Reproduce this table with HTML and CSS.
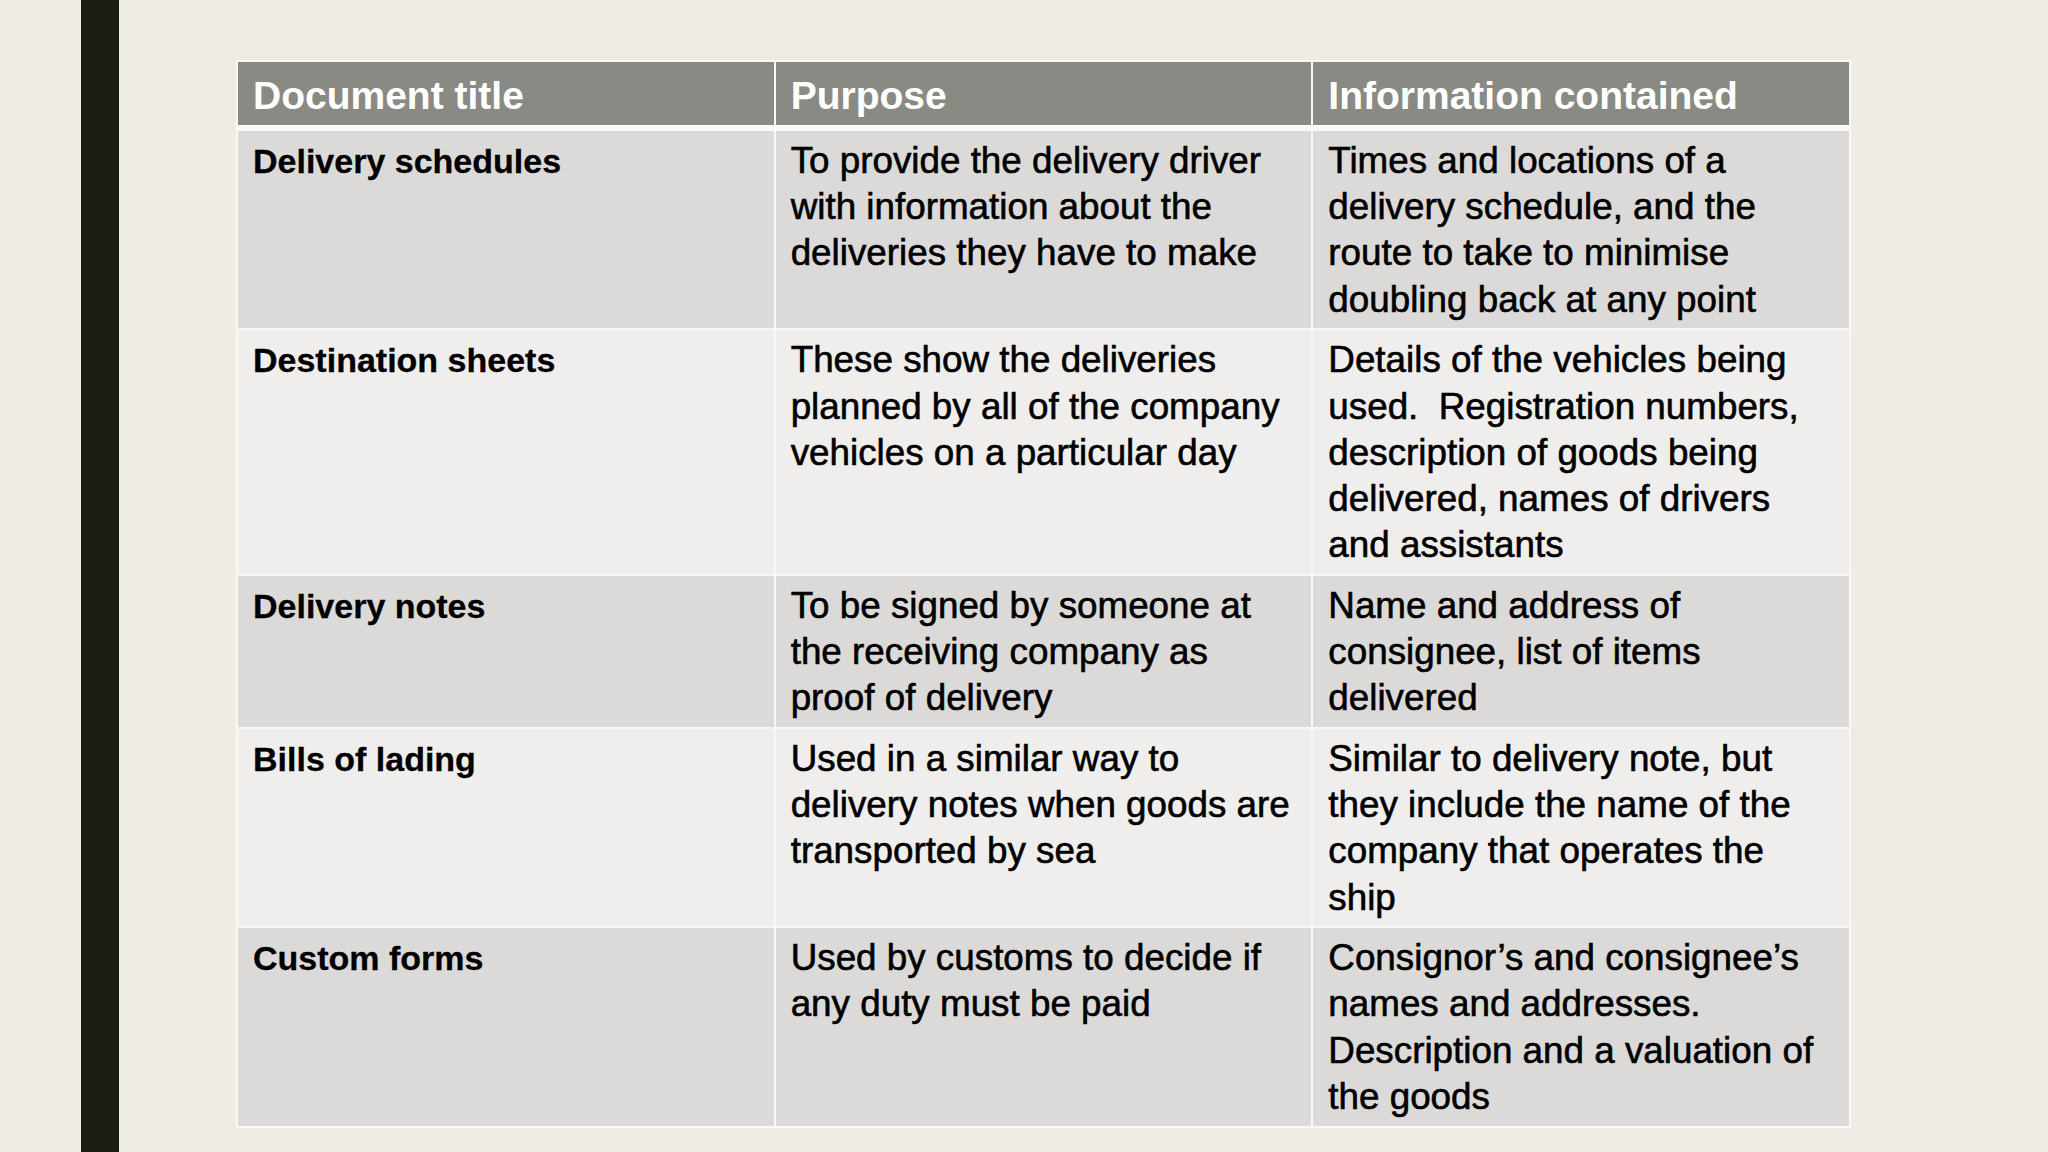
FILE: index.html
```html
<!DOCTYPE html>
<html lang="en">
<head>
<meta charset="utf-8">
<title>Documents</title>
<link rel="stylesheet" href="styles.css">
</head>
<body>
<div class="slide">
  <div class="bar"></div>
  <div class="content">
    <table class="docs">
      <colgroup><col class="c"><col class="c"><col class="c"></colgroup>
      <thead>
        <tr><th>Document title</th><th>Purpose</th><th>Information contained</th></tr>
      </thead>
      <tbody>
        <tr class="odd">
          <td class="title">Delivery schedules</td>
          <td>To provide the delivery driver<br>with information about the<br>deliveries they have to make</td>
          <td>Times and locations of a<br>delivery schedule, and the<br>route to take to minimise<br>doubling back at any point</td>
        </tr>
        <tr class="even">
          <td class="title">Destination sheets</td>
          <td>These show the deliveries<br>planned by all of the company<br>vehicles on a particular day</td>
          <td>Details of the vehicles being<br>used.&nbsp; Registration numbers,<br>description of goods being<br>delivered, names of drivers<br>and assistants</td>
        </tr>
        <tr class="odd">
          <td class="title">Delivery notes</td>
          <td>To be signed by someone at<br>the receiving company as<br>proof of delivery</td>
          <td>Name and address of<br>consignee, list of items<br>delivered</td>
        </tr>
        <tr class="even">
          <td class="title">Bills of lading</td>
          <td>Used in a similar way to<br>delivery notes when goods are<br>transported by sea</td>
          <td>Similar to delivery note, but<br>they include the name of the<br>company that operates the<br>ship</td>
        </tr>
        <tr class="odd">
          <td class="title">Custom forms</td>
          <td>Used by customs to decide if<br>any duty must be paid</td>
          <td>Consignor’s and consignee’s<br>names and addresses.<br>Description and a valuation of<br>the goods</td>
        </tr>
      </tbody>
    </table>
  </div>
</div>
</body>
</html>
```
FILE: styles.css
```css
html, body {
  margin: 0;
  padding: 0;
}
body {
  background: #efebe5;
  width: 2048px;
  height: 1152px;
  overflow: hidden;
  font-family: "Liberation Sans", Arial, sans-serif;
}
.slide {
  display: flex;
  height: 1152px;
}
.bar {
  margin-left: 81px;
  width: 38px;
  background: #1b1c14;
  flex: none;
}
.content {
  padding-left: 117px;
  padding-top: 60px;
}
.docs {
  width: 1615px;
  table-layout: fixed;
  border-collapse: collapse;
  border: 2px solid #f7f6f3;
}
.docs th, .docs td {
  border: 2px solid #f9f8f6;
  text-align: left;
  vertical-align: top;
  padding: 7px 12px 5.5px 15px;
}
.docs th {
  background: #8a8a84;
  color: #fff;
  font-weight: bold;
  font-size: 39px;
  line-height: 44px;
  padding-top: 12px;
  padding-bottom: 7px;
  border-bottom: 6px solid #fbfaf8;
  white-space: nowrap;
}
.docs td {
  color: #000;
  font-size: 36.8px;
  line-height: 46.2px;
  white-space: nowrap;
  -webkit-text-stroke: 0.6px #000;
}
.docs td.title {
  font-weight: bold;
  font-size: 34px;
  -webkit-text-stroke: 0.3px #000;
}
.odd td {
  background: #dbdad8;
}
.even td {
  background: #efeeec;
}
```
